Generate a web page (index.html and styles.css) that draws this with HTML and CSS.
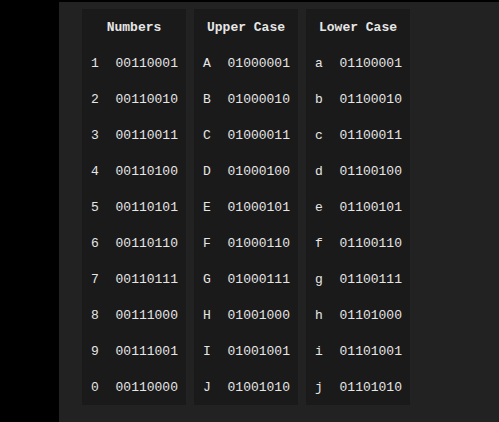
FILE: index.html
```html
<!DOCTYPE html>
<html>
<head>
<meta charset="utf-8">
<link rel="stylesheet" href="styles.css">
</head>
<body>
<div class="panel">
  <div class="tables">
    <table class="chart">
      <tr><th colspan="2">Numbers</th></tr>
      <tr><td>1</td><td>00110001</td></tr>
      <tr><td>2</td><td>00110010</td></tr>
      <tr><td>3</td><td>00110011</td></tr>
      <tr><td>4</td><td>00110100</td></tr>
      <tr><td>5</td><td>00110101</td></tr>
      <tr><td>6</td><td>00110110</td></tr>
      <tr><td>7</td><td>00110111</td></tr>
      <tr><td>8</td><td>00111000</td></tr>
      <tr><td>9</td><td>00111001</td></tr>
      <tr><td>0</td><td>00110000</td></tr>
    </table>
    <table class="chart">
      <tr><th colspan="2">Upper Case</th></tr>
      <tr><td>A</td><td>01000001</td></tr>
      <tr><td>B</td><td>01000010</td></tr>
      <tr><td>C</td><td>01000011</td></tr>
      <tr><td>D</td><td>01000100</td></tr>
      <tr><td>E</td><td>01000101</td></tr>
      <tr><td>F</td><td>01000110</td></tr>
      <tr><td>G</td><td>01000111</td></tr>
      <tr><td>H</td><td>01001000</td></tr>
      <tr><td>I</td><td>01001001</td></tr>
      <tr><td>J</td><td>01001010</td></tr>
    </table>
    <table class="chart">
      <tr><th colspan="2">Lower Case</th></tr>
      <tr><td>a</td><td>01100001</td></tr>
      <tr><td>b</td><td>01100010</td></tr>
      <tr><td>c</td><td>01100011</td></tr>
      <tr><td>d</td><td>01100100</td></tr>
      <tr><td>e</td><td>01100101</td></tr>
      <tr><td>f</td><td>01100110</td></tr>
      <tr><td>g</td><td>01100111</td></tr>
      <tr><td>h</td><td>01101000</td></tr>
      <tr><td>i</td><td>01101001</td></tr>
      <tr><td>j</td><td>01101010</td></tr>
    </table>
  </div>
</div>
</body>
</html>
```
FILE: styles.css
```css
html, body {
  margin: 0;
  padding: 0;
  background: #000;
  height: 100%;
  overflow: hidden;
}
.panel {
  margin: 2px 0 0 59px;
  background: #222222;
  min-height: 440px;
  padding: 7px 0 0 23px;
  box-sizing: border-box;
}
.tables {
  display: flex;
  gap: 8px;
  align-items: flex-start;
}
.chart {
  background: #1a1a1a;
  border-collapse: collapse;
  font-family: "Liberation Mono", "Courier New", monospace;
  font-size: 13px;
  color: #e6e6e6;
  width: 104px;
}
.chart th {
  font-weight: bold;
  height: 36px;
  padding: 0;
  text-align: center;
}
.chart td {
  height: 36px;
  padding: 0 0 0 9px;
  text-align: left;
}
.chart td + td {
  padding-left: 15px;
}
```
